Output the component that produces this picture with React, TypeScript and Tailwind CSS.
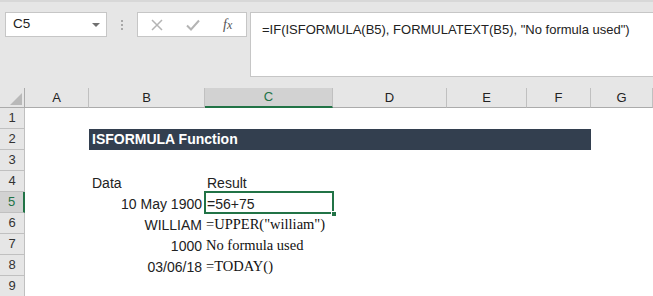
import React from "react";

const cols = ["A", "B", "C", "D", "E", "F", "G"];
const gridCols = "grid-cols-[25px_64px_116px_128px_114px_80px_64px_62px]";

const sans = "font-['Liberation_Sans',Arial,sans-serif]";
const serif = "font-['Liberation_Serif','Times_New_Roman',serif]";

const RowHead = ({ n, active }: { n: number; active?: boolean }) => (
  <div
    className={`h-[21px] flex items-center justify-center border-b border-r border-[#c0c0c0] text-[13px] text-[#333] ${sans} ${
      active ? "bg-[#d2d2d2] border-r-2 border-r-[#217346] text-[#217346]" : "bg-[#e6e6e6]"
    }`}
  >
    {n}
  </div>
);

const Cell = ({ children, className = "" }: { children?: React.ReactNode; className?: string }) => (
  <div className={`h-[21px] flex items-end whitespace-nowrap overflow-visible ${className}`}>
    <span className="translate-y-[2px]">{children}</span>
  </div>
);

const App = () => {
  return (
    <div className={`w-[653px] h-[296px] overflow-hidden bg-white ${sans}`}>
      {/* ribbon / formula bar */}
      <div className="h-[88px] bg-[#e6e6e6] border-t-2 border-t-[#d8d8d8] pt-[10px] flex items-start">
        <div className="ml-[5px] w-[102px] h-[25px] bg-white border border-[#c6c6c6] flex items-center pl-[7px] pr-[6px] justify-between">
          <span className="text-[13.5px] text-[#222]">C5</span>
          <span className="w-0 h-0 border-l-[4px] border-r-[4px] border-t-[4px] border-l-transparent border-r-transparent border-t-[#707070]" />
        </div>
        <div className="w-[30px] h-[25px] flex flex-col items-center justify-center gap-[2px]">
          <span className="w-[2px] h-[2px] bg-[#a8a8a8]" />
          <span className="w-[2px] h-[2px] bg-[#a8a8a8]" />
          <span className="w-[2px] h-[2px] bg-[#a8a8a8]" />
        </div>
        <div className="w-[110px] h-[25px] bg-white border border-[#c6c6c6] flex items-center">
          <svg width="12" height="12" viewBox="0 0 12 12" className="ml-[13px]">
            <path d="M1 1 L11 11 M11 1 L1 11" stroke="#b4b4b4" strokeWidth="1.5" />
          </svg>
          <svg width="14" height="12" viewBox="0 0 14 12" className="ml-[23px]">
            <path d="M1 6.5 L5 10.5 L13 1.5" stroke="#b4b4b4" strokeWidth="2" fill="none" />
          </svg>
          <span className={`ml-[23px] italic text-[14px] text-[#555] ${serif}`}>
            f<span className="text-[12px]">x</span>
          </span>
        </div>
        <div className="ml-[3px] flex-1 h-[65px] bg-white border border-r-0 border-[#c6c6c6] pl-[11px] pt-[4px]">
          <span className="text-[13px] text-[#222] whitespace-nowrap">
            =IF(ISFORMULA(B5), FORMULATEXT(B5), "No formula used")
          </span>
        </div>
      </div>

      {/* sheet */}
      <div className={`grid ${gridCols}`}>
        {/* header row */}
        <div className="h-[20px] bg-[#e6e6e6] border-b border-r border-[#ababab] relative overflow-hidden">
          <svg className="absolute right-[2px] bottom-[2px]" width="12" height="12" viewBox="0 0 12 12">
            <polygon points="12,0 12,12 0,12" fill="#b9b9b9" />
          </svg>
        </div>
        {cols.map((c) => (
          <div
            key={c}
            className={`h-[20px] flex items-center justify-center text-[13px] border-r border-[#c0c0c0] ${
              c === "C"
                ? "bg-[#d2d2d2] border-b-2 border-b-[#217346] text-[#217346]"
                : "bg-[#e6e6e6] border-b border-b-[#ababab] text-[#222]"
            }`}
          >
            {c}
          </div>
        ))}

        {/* row 1 */}
        <RowHead n={1} />
        <div className="col-span-7 h-[21px]" />

        {/* row 2 */}
        <RowHead n={2} />
        <div className="h-[21px]" />
        <div className="col-span-5 h-[21px] bg-[#333f4f] flex items-center pl-[3px]">
          <span className="text-white font-bold text-[14px] whitespace-nowrap">ISFORMULA Function</span>
        </div>
        <div className="h-[21px]" />

        {/* row 3 */}
        <RowHead n={3} />
        <div className="col-span-7 h-[21px]" />

        {/* row 4 */}
        <RowHead n={4} />
        <Cell />
        <Cell className="pl-[3px] text-[14px] text-[#222]">Data</Cell>
        <Cell className="pl-[2px] text-[14px] text-[#222]">Result</Cell>
        <div className="col-span-4 h-[21px]" />

        {/* row 5 */}
        <RowHead n={5} active />
        <Cell />
        <Cell className="justify-end pr-[3px] text-[14px] text-[#222]">10 May 1900</Cell>
        <div className="relative h-[21px] flex items-end pl-[2px] text-[14px] text-[#222] whitespace-nowrap">
          <span className="translate-y-[2px]">=56+75</span>
          <div className="absolute -left-[1px] -top-[1px] -right-[1px] -bottom-[1px] border-2 border-[#217346] pointer-events-none" />
          <div className="absolute -right-[4px] -bottom-[4px] w-[6px] h-[6px] bg-[#217346] border border-white" />
        </div>
        <div className="col-span-4 h-[21px]" />

        {/* row 6 */}
        <RowHead n={6} />
        <Cell />
        <Cell className="justify-end pr-[3px] text-[14px] text-[#222]">WILLIAM</Cell>
        <Cell className={`pl-[1px] text-[14.5px] text-[#111] ${serif}`}>=UPPER("william")</Cell>
        <div className="col-span-4 h-[21px]" />

        {/* row 7 */}
        <RowHead n={7} />
        <Cell />
        <Cell className="justify-end pr-[3px] text-[14px] text-[#222]">1000</Cell>
        <Cell className={`pl-[1px] text-[14.5px] text-[#111] ${serif}`}>No formula used</Cell>
        <div className="col-span-4 h-[21px]" />

        {/* row 8 */}
        <RowHead n={8} />
        <Cell />
        <Cell className="justify-end pr-[3px] text-[14px] text-[#222]">03/06/18</Cell>
        <Cell className={`pl-[1px] text-[14.5px] text-[#111] ${serif}`}>=TODAY()</Cell>
        <div className="col-span-4 h-[21px]" />

        {/* row 9 */}
        <RowHead n={9} />
        <div className="col-span-7 h-[21px]" />
      </div>
    </div>
  );
};

export default App;
